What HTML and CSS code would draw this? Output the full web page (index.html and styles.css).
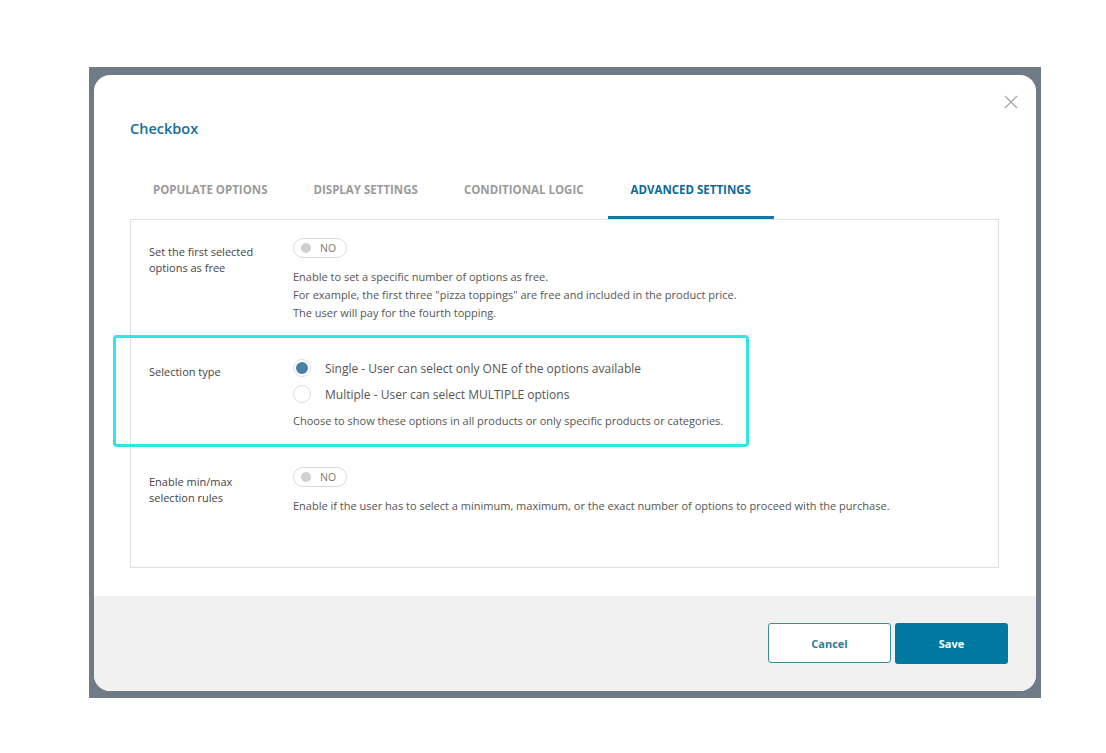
FILE: index.html
```html
<!DOCTYPE html>
<html lang="en">
<head>
    <meta charset="UTF-8">
    <meta name="viewport" content="width=device-width, initial-scale=1.0">
    <title>Checkbox</title>
    <link rel="stylesheet" href="styles.css">
</head>
<body>
    <div class="backdrop">
        <div class="modal">
            <div class="modal-head">
                <h2 class="modal-title">Checkbox</h2>
                <button class="close" aria-label="Close">
                    <svg width="14" height="14" viewBox="0 0 14 14"><path d="M1 1L13 13M13 1L1 13" stroke="#a9a9a9" stroke-width="1.4" fill="none"/></svg>
                </button>
            </div>

            <div class="modal-body">
                <div class="tabs">
                    <div class="tab">Populate options</div>
                    <div class="tab">Display settings</div>
                    <div class="tab">Conditional logic</div>
                    <div class="tab active">Advanced settings</div>
                </div>

                <div class="panel">
                    <div class="row row-free">
                        <div class="row-label">Set the first selected options as free</div>
                        <div class="row-field">
                            <span class="toggle"><span class="knob"></span>NO</span>
                            <p class="desc">Enable to set a specific number of options as free.<br>For example, the first three "pizza toppings" are free and included in the product price.<br>The user will pay for the fourth topping.</p>
                        </div>
                    </div>

                    <div class="row row-type">
                        <div class="highlight"></div>
                        <div class="row-label">Selection type</div>
                        <div class="row-field">
                            <label class="radio"><span class="dot checked"></span>Single - User can select only ONE of the options available</label>
                            <label class="radio"><span class="dot"></span>Multiple - User can select MULTIPLE options</label>
                            <p class="desc">Choose to show these options in all products or only specific products or categories.</p>
                        </div>
                    </div>

                    <div class="row row-rules">
                        <div class="row-label">Enable min/max selection rules</div>
                        <div class="row-field">
                            <span class="toggle"><span class="knob"></span>NO</span>
                            <p class="desc">Enable if the user has to select a minimum, maximum, or the exact number of options to proceed with the purchase.</p>
                        </div>
                    </div>
                </div>
            </div>

            <div class="modal-foot">
                <button class="btn btn-cancel">Cancel</button>
                <button class="btn btn-save">Save</button>
            </div>
        </div>
    </div>
</body>
</html>
```

FILE: styles.css
```css
body {
    margin: 0;
    background: #fff;
    font-family: "Open Sans", "Noto Sans", sans-serif;
}
.backdrop {
    width: 952px;
    height: 631px;
    box-sizing: border-box;
    margin: 67px 0 0 89px;
    padding: 8px 5px 7px 5px;
    background-color: #6f7b87;
}
.modal {
    height: 100%;
    background: #fff;
    border-radius: 16px;
    overflow: hidden;
    display: flex;
    flex-direction: column;
}
.modal-head {
    display: flex;
    justify-content: space-between;
    align-items: flex-start;
    padding: 20px 18px 0 36px;
}
.modal-title {
    margin: 24px 0 0;
    font-size: 14.5px;
    line-height: 20px;
    font-weight: 600;
    color: #12709b;
}
.close {
    width: 14px;
    height: 14px;
    padding: 0;
    border: none;
    background: none;
    cursor: pointer;
}
.close svg {
    display: block;
}
.modal-body {
    flex: 1;
    padding: 0 37px 0 36px;
}
.tabs {
    display: flex;
    margin-top: 27px;
}
.tab {
    padding: 16px 23px 18px 23px;
    font-size: 11.5px;
    line-height: 16px;
    font-weight: 700;
    text-transform: uppercase;
    color: #9b9b9b;
    border-bottom: 3px solid transparent;
}
.tab.active {
    margin-left: 1px;
    color: #0e6a98;
    border-bottom-color: #1478a3;
}
.panel {
    border: 1px solid #e0e0e0;
    height: 349px;
    box-sizing: border-box;
    padding: 16px 19px 0 18px;
}
.row {
    display: flex;
    position: relative;
}
.row-label {
    width: 144px;
    flex-shrink: 0;
    padding-right: 20px;
    box-sizing: border-box;
    font-size: 11px;
    line-height: 16px;
    color: #444;
}
.row-free .row-label {
    padding-top: 8px;
}
.row-rules .row-label {
    padding-top: 9px;
}
.row-type {
    margin-top: 33px;
}
.row-type .row-label {
    padding-top: 9px;
}
.row-rules {
    margin-top: 35px;
}
.row-field {
    flex: 1;
}
.toggle {
    display: inline-flex;
    align-items: center;
    width: 54px;
    height: 20px;
    box-sizing: border-box;
    border: 1px solid #dcdcdc;
    border-radius: 10px;
    padding-left: 7px;
    font-size: 10.5px;
    color: #777;
}
.knob {
    width: 10px;
    height: 10px;
    border-radius: 50%;
    background: #d0d0d0;
    margin-right: 9px;
}
.desc {
    margin: 10px 0 0;
    font-size: 11px;
    line-height: 18px;
    color: #555;
}
.row-type .desc {
    margin-top: 5px;
}
.radio {
    display: flex;
    align-items: center;
    height: 26px;
    font-size: 12px;
    color: #555;
}
.dot {
    width: 18px;
    height: 18px;
    box-sizing: border-box;
    border: 1px solid #dedede;
    border-radius: 50%;
    margin-right: 14px;
    position: relative;
    background: #fff;
}
.dot.checked::after {
    content: "";
    position: absolute;
    top: 2px;
    left: 2px;
    width: 12px;
    height: 12px;
    border-radius: 50%;
    background: #4a80a3;
}
.highlight {
    position: absolute;
    left: -36px;
    top: -20px;
    width: 636px;
    height: 112px;
    box-sizing: border-box;
    border: 3px solid #2ee6e6;
    border-radius: 4px;
    pointer-events: none;
}
.modal-foot {
    height: 95px;
    box-sizing: border-box;
    background: #f1f1f1;
    display: flex;
    justify-content: flex-end;
    align-items: flex-start;
    gap: 4px;
    padding: 27px 28px 0 0;
    margin-top: 28px;
}
.btn {
    height: 40px;
    border-radius: 3px;
    font-family: "Open Sans", sans-serif;
    font-size: 11px;
    font-weight: 700;
    cursor: pointer;
}
.btn-cancel {
    width: 123px;
    background: #fff;
    border: 1px solid #3a8aa0;
    color: #2b7f98;
}
.btn-save {
    width: 113px;
    height: 41px;
    background: #00789f;
    border: none;
    color: #fff;
}
```
